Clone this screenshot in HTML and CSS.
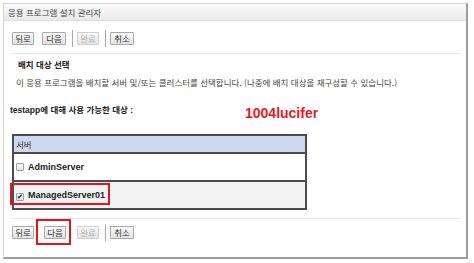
FILE: index.html
```html
<!DOCTYPE html>
<html lang="ko">
<head>
    <meta charset="UTF-8">
    <meta name="viewport" content="width=device-width, initial-scale=1.0">
    <title>응용 프로그램 설치 관리자</title>
    <link rel="stylesheet" href="styles.css">
</head>
<body>

    <div class="panel">
        <div class="titlebar">응용 프로그램 설치 관리자</div>

        <div class="toolbar top">
            <button class="btn">뒤로</button>
            <button class="btn wide">다음</button>
            <span class="sep"></span>
            <button class="btn" disabled>완료</button>
            <span class="sep"></span>
            <button class="btn wide">취소</button>
        </div>

        <div class="rule"></div>

        <h2 class="step-title">배치 대상 선택</h2>
        <p class="step-desc">이 응용 프로그램을 배치할 서버 및/또는 클러스터를 선택합니다. (나중에 배치 대상을 재구성할 수 있습니다.)</p>

        <div class="target-row">
            <span class="target-label">testapp에 대해 사용 가능한 대상 :</span>
            <span class="watermark">1004lucifer</span>
        </div>

        <div class="table-wrap">
            <table class="servers">
                <tr class="head"><th>서버</th></tr>
                <tr>
                    <td><span class="check"></span>AdminServer</td>
                </tr>
                <tr class="alt">
                    <td><span class="check on">&#10004;</span>ManagedServer01</td>
                </tr>
            </table>
            <div class="mark row-mark"></div>
        </div>

        <div class="rule bottom"></div>

        <div class="toolbar">
            <button class="btn">뒤로</button>
            <button class="btn marked">다음</button>
            <button class="btn" disabled>완료</button>
            <span class="sep"></span>
            <button class="btn wide">취소</button>
        </div>
    </div>

</body>
</html>
```

FILE: styles.css
```css
body {
    margin: 0;
    padding: 0;
    background-color: #fff;
    font-family: "Noto Sans CJK KR", "DejaVu Sans", sans-serif;
    font-size: 8.5px;
    color: #333;
}
.panel {
    margin: 3px 0 0 3px;
    width: 465px;
    height: 256px;
    box-sizing: border-box;
    border: 1px solid #d4d4d4;
    border-right: 2px solid #9c9c9c;
    border-bottom: 2px solid #9c9c9c;
    background-color: #fff;
}
.titlebar {
    height: 16px;
    line-height: 16px;
    padding-left: 4px;
    background: linear-gradient(#fbfbfb, #e9e9e9);
    border-bottom: 1px solid #dedede;
    color: #444;
}
.toolbar {
    display: flex;
    align-items: center;
    height: 16px;
    padding-left: 8px;
    margin-top: 5px;
}
.toolbar.top {
    margin-top: 9px;
}
.btn {
    flex: none;
    height: 13px;
    width: 22px;
    padding: 0;
    margin: 0 8px 0 0;
    border: 1px solid #a9a9a9;
    border-radius: 1px;
    background: linear-gradient(#fafafa, #e2e2e2);
    font-family: "Noto Sans CJK KR", sans-serif;
    font-size: 8.5px;
    line-height: 11px;
    color: #333;
}
.btn.wide {
    width: 24px;
}
.btn[disabled] {
    color: #b0b0b0;
    border-color: #cfcfcf;
    margin-right: 6px;
}
.toolbar .sep {
    flex: none;
    width: 1px;
    height: 17px;
    background-color: #a8a8a8;
    margin-right: 4px;
}
.toolbar.top .btn.wide:nth-child(2) {
    margin-right: 6px;
}
.marked {
    position: relative;
}
.toolbar .marked {
    margin-left: 2px;
    margin-right: 11px;
}
.marked::after {
    content: "";
    position: absolute;
    left: -9px;
    top: -8px;
    width: 31px;
    height: 22px;
    border: 2px solid #e0161c;
}
.rule {
    height: 1px;
    margin: 7px 5px 0 8px;
    background-color: #e6e6e6;
}
.rule.bottom {
    margin-top: 8px;
}
.step-title {
    margin: 4px 0 0 14px;
    font-size: 8.5px;
    line-height: 12px;
    color: #222;
}
.step-desc {
    margin: 6px 0 0 12px;
    line-height: 12px;
    color: #444;
}
.target-row {
    display: flex;
    align-items: center;
    margin: 16px 0 0 6px;
    height: 16px;
}
.target-label {
    width: 235px;
    font-family: "Liberation Sans", "Noto Sans CJK KR", sans-serif;
    font-weight: bold;
    color: #222;
    margin-top: -6px;
}
.watermark {
    font-family: "Liberation Sans", sans-serif;
    font-weight: bold;
    font-size: 14px;
    color: #e31b23;
    margin-top: 2px;
}
.table-wrap {
    position: relative;
    margin: 14px 0 0 8px;
    width: 295px;
}
.servers {
    width: 100%;
    border-collapse: collapse;
    border: 2px solid #4c4c4c;
}
.servers th,
.servers td {
    border: 2px solid #4c4c4c;
    border-left: none;
    border-right: none;
    text-align: left;
    padding: 0 0 0 2px;
}
.servers th {
    height: 16px;
    background-color: #ccd9ef;
    font-weight: normal;
    color: #333;
}
.servers td {
    height: 26px;
    font-family: "Liberation Sans", sans-serif;
    font-size: 9px;
    font-weight: bold;
    color: #222;
}
.servers tr.alt td {
    background-color: #f3f3f3;
}
.check {
    display: inline-block;
    width: 8px;
    height: 8px;
    margin-right: 4px;
    vertical-align: -1px;
    border: 1px solid #a0a0a0;
    border-radius: 1px;
    background: linear-gradient(#fdfdfd, #e4e4e4);
    box-sizing: border-box;
    font-size: 7px;
    line-height: 6px;
    text-align: center;
    color: #333;
}
.mark {
    position: absolute;
    border: 2px solid #e0161c;
}
.row-mark {
    left: -2px;
    top: 49px;
    width: 96px;
    height: 18px;
}
```
